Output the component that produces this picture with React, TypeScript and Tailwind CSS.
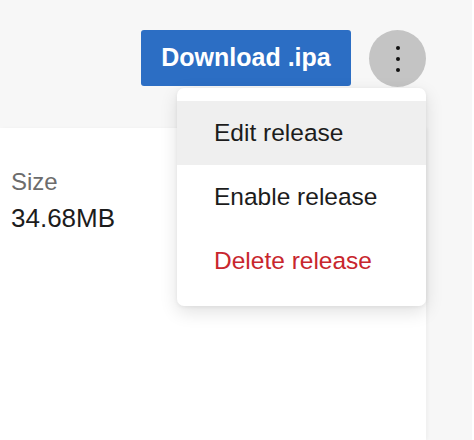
const font = { fontFamily: '"Liberation Sans", Arial, Helvetica, sans-serif' };

const MENU = [
  { label: "Edit release", tone: "text-[#1c1c1c]", active: true },
  { label: "Enable release", tone: "text-[#1c1c1c]", active: false },
  { label: "Delete release", tone: "text-[#c8262d]", active: false },
];

function ReleaseMenu() {
  return (
    <div className="absolute left-[177px] top-[88px] w-[249px] rounded-[7px] bg-white py-[13px] shadow-[0_6px_18px_rgba(0,0,0,0.12),0_1px_4px_rgba(0,0,0,0.06)]">
      {MENU.map((m) => (
        <div
          key={m.label}
          className={`flex h-[64px] items-center pl-[37px] text-[24.5px] ${m.tone} ${
            m.active ? "bg-[#efefef]" : ""
          }`}
        >
          {m.label}
        </div>
      ))}
    </div>
  );
}

function Dots() {
  return (
    <svg width="6" height="28" viewBox="0 0 6 28" fill="#111">
      <circle cx="3" cy="3" r="2" />
      <circle cx="3" cy="14" r="2" />
      <circle cx="3" cy="25" r="2" />
    </svg>
  );
}

export default function App() {
  return (
    <div
      className="relative flex h-[440px] w-[474px] overflow-hidden bg-[#f7f7f7]"
      style={font}
    >
      <div className="flex w-[426px] flex-col">
        <div className="flex h-[128px] items-start justify-end gap-[18px] pt-[30px]">
          <button className="flex h-[56px] w-[210px] items-center justify-center rounded-[3px] bg-[#2c6ec4] text-[25px] font-bold text-white">
            Download .ipa
          </button>
          <button
            aria-label="More actions"
            className="flex h-[57px] w-[57px] items-center justify-center rounded-full bg-[#c4c4c4]"
          >
            <Dots />
          </button>
        </div>
        <div className="flex-1 bg-white pl-[11px] pt-[36px] shadow-[2px_0_3px_rgba(0,0,0,0.03)]">
          <div className="text-[24px] leading-[36px] text-[#6c6c6c]">Size</div>
          <div className="text-[26px] leading-[36px] text-[#1c1c1c]">34.68MB</div>
        </div>
      </div>
      <div className="w-[46px]" />
      <div className="w-[2px] bg-white" />
      <ReleaseMenu />
    </div>
  );
}
